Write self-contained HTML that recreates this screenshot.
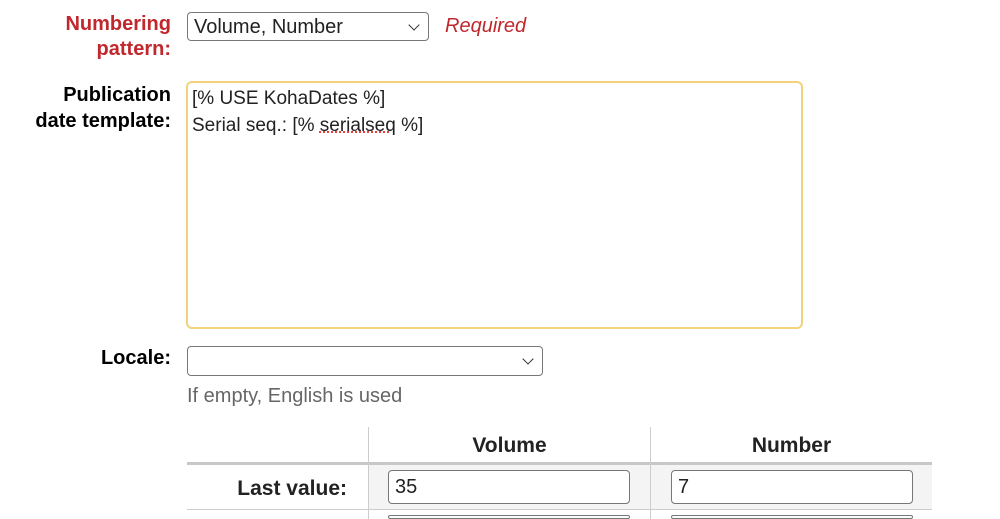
<!DOCTYPE html><html style="overflow:hidden;height:519px"><head><style>
html,body{margin:0;width:1000px;height:519px;overflow:hidden}
body{background:#fff;font-family:"Liberation Sans",sans-serif;position:relative}
.a{position:absolute}
.lbl{font-weight:bold;font-size:20px;text-align:right;right:829px;line-height:25px;color:#000}
.sel{border:1px solid #777;border-radius:4px;background:#fff;box-sizing:border-box}
.chev{position:absolute;right:10px;top:50%;width:7px;height:7px;border-right:1.3px solid #333;border-bottom:1.3px solid #333;transform:translateY(-75%) rotate(45deg)}
.inp{position:absolute;border:1px solid #777;border-radius:4px;background:#fff;box-sizing:border-box;font-size:20px;padding-left:6px;line-height:32px;color:#222}
</style></head><body>
<div class="a lbl" style="top:12px;color:#c0282d">Numbering<br>pattern:</div>
<div class="a sel" style="left:187px;top:12px;width:242px;height:29px"><span class="a" style="left:6px;top:3px;font-size:20px;color:#222">Volume, Number</span><span class="chev"></span></div>
<div class="a" style="left:445px;top:15px;font-size:20px;font-style:italic;color:#c0282d">Required</div>
<div class="a lbl" style="top:82px;line-height:26px">Publication<br>date template:</div>
<div class="a" style="left:186px;top:81px;width:617px;height:248px;border:2px solid #f2d27a;border-radius:6px;box-sizing:border-box;font-size:19px;line-height:27px;color:#222;padding:2px 4px">[% USE KohaDates %]<br>Serial seq.: [% <span style="text-decoration:underline dotted #e33">serialseq</span> %]</div>
<div class="a lbl" style="top:346px">Locale:</div>
<div class="a sel" style="left:187px;top:346px;width:356px;height:30px"><span class="chev"></span></div>
<div class="a" style="left:187px;top:385px;font-size:20px;color:#666">If empty, English is used</div>
<div class="a" style="left:368px;top:464px;width:564px;height:45px;background:#f3f4f3"></div>
<div class="a" style="left:187px;top:462px;width:745px;height:3px;background:#c8c8c8"></div>
<div class="a" style="left:187px;top:509px;width:745px;height:1px;background:#ccc"></div>
<div class="a" style="left:368px;top:427px;width:1px;height:92px;background:#ccc"></div>
<div class="a" style="left:650px;top:427px;width:1px;height:92px;background:#ccc"></div>
<div class="a" style="left:369px;top:434px;width:281px;text-align:center;font-weight:bold;font-size:21px;color:#222">Volume</div>
<div class="a" style="left:651px;top:434px;width:281px;text-align:center;font-weight:bold;font-size:21px;color:#222">Number</div>
<div class="a" style="right:653px;top:477px;font-weight:bold;font-size:21px;color:#222">Last value:</div>
<div class="inp" style="left:388px;top:470px;width:242px;height:34px">35</div>
<div class="inp" style="left:671px;top:470px;width:242px;height:34px">7</div>
<div class="inp" style="left:388px;top:515px;width:242px;height:4px"></div>
<div class="inp" style="left:671px;top:515px;width:242px;height:4px"></div>
</body></html>
